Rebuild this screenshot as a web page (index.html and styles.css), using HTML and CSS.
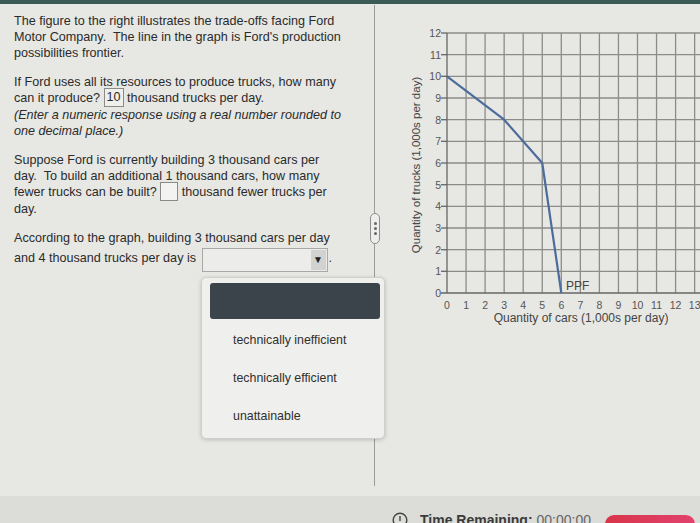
FILE: index.html
```html
<!DOCTYPE html>
<html>
<head>
<meta charset="utf-8">
<link rel="stylesheet" href="styles.css">
</head>
<body>
<div class="topbar"></div>
<div class="main">
  <div class="left">
    <p class="para">The figure to the right illustrates the trade-offs facing Ford<br>Motor Company.&nbsp; The line in the graph is Ford's production<br>possibilities frontier.</p>
    <p class="para">If Ford uses all its resources to produce trucks, how many<br>can it produce? <span class="box box-filled">10</span> thousand trucks per day.<br><em class="hint">(Enter a numeric response using a real number rounded to<br>one decimal place.)</em></p>
    <p class="para">Suppose Ford is currently building 3 thousand cars per<br>day.&nbsp; To build an additional 1 thousand cars, how many<br>fewer trucks can be built? <span class="box box-empty"></span> thousand fewer trucks per<br>day.</p>
    <p class="para para-last">According to the graph, building 3 thousand cars per day<br>and 4 thousand trucks per day is <span class="select"><span class="select-arrow">&#9660;</span></span>.</p>
    <div class="menu">
      <div class="menu-selected"></div>
      <div class="menu-item">technically inefficient</div>
      <div class="menu-item">technically efficient</div>
      <div class="menu-item">unattainable</div>
    </div>
  </div>
  <div class="divider">
    <div class="divider-line"></div>
    <div class="handle"><span class="dot"></span><span class="dot"></span><span class="dot"></span></div>
  </div>
  <div class="right">
    <svg class="graph" width="323" height="340" viewBox="377 4 323 340" xmlns="http://www.w3.org/2000/svg">
      <g stroke="#8c8c8c" stroke-width="1.3">
        <line x1="462.05" y1="33" x2="462.05" y2="293"/>
        <line x1="481.1" y1="33" x2="481.1" y2="293"/>
        <line x1="500.15" y1="33" x2="500.15" y2="293"/>
        <line x1="519.2" y1="33" x2="519.2" y2="293"/>
        <line x1="538.25" y1="33" x2="538.25" y2="293"/>
        <line x1="557.3" y1="33" x2="557.3" y2="293"/>
        <line x1="576.35" y1="33" x2="576.35" y2="293"/>
        <line x1="595.4" y1="33" x2="595.4" y2="293"/>
        <line x1="614.45" y1="33" x2="614.45" y2="293"/>
        <line x1="633.5" y1="33" x2="633.5" y2="293"/>
        <line x1="652.55" y1="33" x2="652.55" y2="293"/>
        <line x1="671.6" y1="33" x2="671.6" y2="293"/>
        <line x1="690.65" y1="33" x2="690.65" y2="293"/>
        <line x1="443" y1="33" x2="700" y2="33"/>
        <line x1="443" y1="54.7" x2="700" y2="54.7"/>
        <line x1="443" y1="76.3" x2="700" y2="76.3"/>
        <line x1="443" y1="98" x2="700" y2="98"/>
        <line x1="443" y1="119.7" x2="700" y2="119.7"/>
        <line x1="443" y1="141.3" x2="700" y2="141.3"/>
        <line x1="443" y1="163" x2="700" y2="163"/>
        <line x1="443" y1="184.7" x2="700" y2="184.7"/>
        <line x1="443" y1="206.3" x2="700" y2="206.3"/>
        <line x1="443" y1="228" x2="700" y2="228"/>
        <line x1="443" y1="249.7" x2="700" y2="249.7"/>
        <line x1="443" y1="271.3" x2="700" y2="271.3"/>
      </g>
      <g stroke="#666" stroke-width="1.3">
        <line x1="443" y1="33" x2="443" y2="293"/>
        <line x1="437" y1="293" x2="700" y2="293"/>
        <line x1="437" y1="33" x2="443" y2="33"/>
        <line x1="437" y1="54.7" x2="443" y2="54.7"/>
        <line x1="437" y1="76.3" x2="443" y2="76.3"/>
        <line x1="437" y1="98" x2="443" y2="98"/>
        <line x1="437" y1="119.7" x2="443" y2="119.7"/>
        <line x1="437" y1="141.3" x2="443" y2="141.3"/>
        <line x1="437" y1="163" x2="443" y2="163"/>
        <line x1="437" y1="184.7" x2="443" y2="184.7"/>
        <line x1="437" y1="206.3" x2="443" y2="206.3"/>
        <line x1="437" y1="228" x2="443" y2="228"/>
        <line x1="437" y1="249.7" x2="443" y2="249.7"/>
        <line x1="437" y1="271.3" x2="443" y2="271.3"/>
      </g>
      <g class="ticklabel" text-anchor="end">
        <text x="437" y="37">12</text>
        <text x="437" y="58.7">11</text>
        <text x="437" y="80.3">10</text>
        <text x="437" y="102">9</text>
        <text x="437" y="123.7">8</text>
        <text x="437" y="145.3">7</text>
        <text x="437" y="167">6</text>
        <text x="437" y="188.7">5</text>
        <text x="437" y="210.3">4</text>
        <text x="437" y="232">3</text>
        <text x="437" y="253.7">2</text>
        <text x="437" y="275.3">1</text>
        <text x="437" y="297">0</text>
      </g>
      <g class="ticklabel" text-anchor="middle">
        <text x="443" y="309">0</text>
        <text x="462.05" y="309">1</text>
        <text x="481.1" y="309">2</text>
        <text x="500.15" y="309">3</text>
        <text x="519.2" y="309">4</text>
        <text x="538.25" y="309">5</text>
        <text x="557.3" y="309">6</text>
        <text x="576.35" y="309">7</text>
        <text x="595.4" y="309">8</text>
        <text x="614.45" y="309">9</text>
        <text x="633.5" y="309">10</text>
        <text x="652.55" y="309">11</text>
        <text x="671.6" y="309">12</text>
        <text x="690.65" y="309">13</text>
      </g>
      <polyline points="443,76.3 500.15,119.7 538.25,163 557.3,293" fill="none" stroke="#4c6d9c" stroke-width="2.2" stroke-linejoin="round"/>
      <text class="ppf" x="562" y="290">PPF</text>
      <text class="axistitle" x="577" y="322" text-anchor="middle">Quantity of cars (1,000s per day)</text>
      <text class="axistitle axistitle-y" x="0" y="0" text-anchor="middle" transform="translate(416 165) rotate(-90)">Quantity of trucks (1,000s per day)</text>
    </svg>
  </div>
</div>
<div class="footer">
  <div class="timer">
    <svg class="clock" width="16" height="16" viewBox="0 0 16 16"><circle cx="8" cy="8" r="6.8" fill="none" stroke="#444" stroke-width="1.4"/><line x1="8" y1="4" x2="8" y2="9" stroke="#444" stroke-width="1.4"/></svg>
    <span class="timer-label">Time Remaining:</span>
    <span class="timer-value">00:00:00</span>
  </div>
  <div class="submit"></div>
</div>
</body>
</html>
```
FILE: styles.css
```css
* { box-sizing: border-box; }
html, body { margin: 0; padding: 0; }
body {
  width: 700px;
  height: 523px;
  overflow: hidden;
  background: #e7e7e3;
  font-family: "Liberation Sans", Arial, sans-serif;
  color: #2b2b2b;
}
.topbar {
  height: 4px;
  background: #3d5b56;
}
.main {
  display: flex;
  height: 492px;
}
.left {
  position: relative;
  width: 370px;
  padding: 9px 0 0 14px;
  font-size: 12.6px;
  line-height: 16px;
}
.para {
  margin: 0 0 13px 0;
}
.hint { font-style: italic; }
.box {
  display: inline-block;
  vertical-align: middle;
  height: 19px;
  border: 1px solid #8a8a8a;
  background: #efefec;
  text-align: center;
  line-height: 17px;
  margin-top: -2px;
}
.box-filled { width: 20px; }
.box-empty { width: 18px; background: #f3f3f1; }
.select {
  position: relative;
  display: inline-block;
  vertical-align: middle;
  width: 126px;
  height: 24px;
  border: 1px solid #a8a8a8;
  background: #ececea;
  margin: 2px 1px 0 2px;
}
.select-arrow {
  position: absolute;
  right: 1px;
  top: 1px;
  width: 15px;
  height: 20px;
  background: #d2d2d0;
  color: #222;
  font-size: 10px;
  line-height: 20px;
  text-align: center;
}
.menu {
  position: absolute;
  left: 201px;
  top: 273px;
  width: 184px;
  height: 162px;
  background: #efefed;
  border: 1px solid #cfcfcc;
  border-radius: 5px;
  box-shadow: 0 1px 4px rgba(0,0,0,0.18);
  padding: 5px 4px 0 8px;
  z-index: 2;
}
.menu-selected {
  height: 36px;
  background: #3b444b;
  border-radius: 3px;
  margin-bottom: 2px;
}
.menu-item {
  height: 38px;
  line-height: 38px;
  padding-left: 23px;
  font-size: 12.4px;
  color: #2f2f2f;
}
.divider {
  position: relative;
  width: 12px;
  margin-left: -1px;
}
.divider-line {
  position: absolute;
  left: 5px;
  top: 1px;
  bottom: 10px;
  width: 1px;
  background: #9a9a9a;
}
.handle {
  position: absolute;
  left: 1px;
  top: 209px;
  width: 10px;
  height: 31px;
  border: 1px solid #8f8f8f;
  border-radius: 5px;
  background: #eeeeec;
  display: flex;
  flex-direction: column;
  align-items: center;
  justify-content: center;
  gap: 2px;
}
.dot {
  width: 3px;
  height: 3px;
  border-radius: 50%;
  background: #666;
}
.right {
  flex: 1;
  overflow: hidden;
}
.graph { display: block; }
.ticklabel text {
  font-family: "Liberation Sans", Arial, sans-serif;
  font-size: 10.5px;
  fill: #555;
}
.ppf {
  font-family: "Liberation Sans", Arial, sans-serif;
  font-size: 12px;
  fill: #444;
}
.axistitle {
  font-family: "Liberation Sans", Arial, sans-serif;
  font-size: 12px;
  fill: #444;
}
.axistitle-y { font-size: 11.5px; }
.footer {
  height: 27px;
  background: #dcdcd8;
  display: flex;
  align-items: flex-start;
  padding: 16px 5px 0 392px;
}
.timer {
  display: flex;
  align-items: center;
  gap: 4px;
  font-size: 14px;
  line-height: 16px;
}
.clock { flex: none; margin-right: 8px; }
.timer-label { font-weight: bold; color: #3a3a3a; }
.timer-value { color: #666; }
.submit {
  margin-left: auto;
  margin-top: 3px;
  width: 90px;
  height: 20px;
  border-radius: 9px;
  background: linear-gradient(90deg, #d8354a, #e2416e);
}
```
